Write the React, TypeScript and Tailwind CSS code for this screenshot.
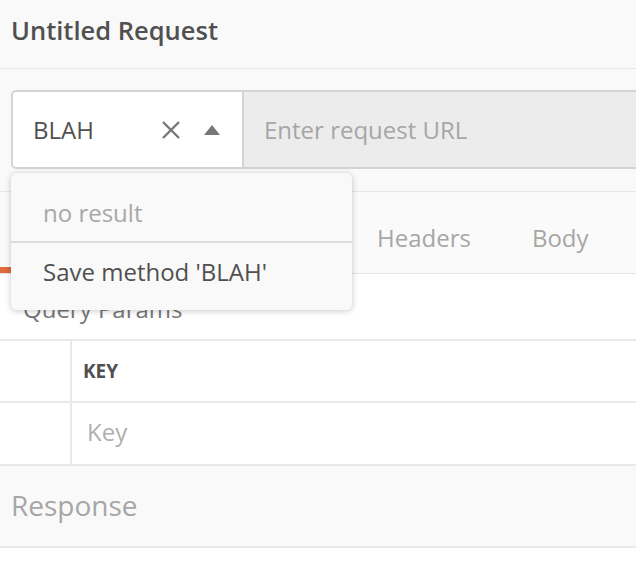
import React from "react";

const font = { fontFamily: '"Open Sans", "Noto Sans", sans-serif' };

export default function App() {
  return (
    <div className="relative w-[636px] h-[582px] overflow-hidden bg-white" style={font}>
      {/* title */}
      <div className="h-[69px] bg-[#f9f9f9] border-b border-[#e6e6e6] flex items-center px-[11px] pb-[7px]">
        <h1 className="text-[25.5px] font-semibold text-[#505050]">Untitled Request</h1>
      </div>

      {/* url bar */}
      <div className="bg-[#f9f9f9] pt-[21px] pb-[22px] pl-[11px] flex">
        <div className="w-[233px] h-[79px] bg-white border-2 border-[#d4d4d4] rounded-l-[5px] flex items-center pl-[20px] pr-[22px]">
          <span className="flex-1 text-[24px] text-[#505050]">BLAH</span>
          <svg width="20" height="20" viewBox="0 0 20 20" className="mr-[23px]">
            <path d="M2 2 L18 18 M18 2 L2 18" stroke="#777" strokeWidth="2.4" />
          </svg>
          <svg width="16" height="10" viewBox="0 0 16 10">
            <path d="M8 0 L16 10 L0 10 Z" fill="#777" />
          </svg>
        </div>
        <div className="flex-1 h-[79px] bg-[#ececec] border-y-2 border-[#d4d4d4] flex items-center pl-[20px]">
          <span className="text-[24px] text-[#a6a6a6]">Enter request URL</span>
        </div>
      </div>

      {/* tabs (the active one sits under the dropdown) */}
      <div className="h-[83px] bg-[#fafafa] border-y border-[#e6e6e6] flex items-stretch">
        <div className="relative w-[150px]">
          <div className="absolute left-0 right-0 bottom-0 h-[6px] bg-[#e06a3b]" />
        </div>
        <div className="w-[215px]" />
        <div className="flex items-center pl-[12px] pr-[61px] pt-[10px] text-[24px] text-[#a6a6a6]">Headers</div>
        <div className="flex items-center pt-[10px] text-[24px] text-[#a6a6a6]">Body</div>
      </div>

      {/* query params */}
      <div className="h-[65px] bg-white pl-[23px] pt-[17px]">
        <span className="text-[24px] text-[#777]">Query Params</span>
      </div>
      <div className="border-t-2 border-[#e9e9e9]">
        <div className="flex h-[62px] border-b-2 border-[#e9e9e9]">
          <div className="w-[72px] border-r-2 border-[#e9e9e9]" />
          <div className="flex items-center pl-[11px] text-[19px] font-bold text-[#505050]">KEY</div>
        </div>
        <div className="flex h-[61px]">
          <div className="w-[72px] border-r-2 border-[#e9e9e9]" />
          <div className="flex items-center pl-[15px] pb-[4px] text-[24px] text-[#b0b0b0]">Key</div>
        </div>
      </div>

      {/* response */}
      <div className="h-[84px] bg-[#f9f9f9] border-y-2 border-[#e9e9e9] flex items-center pl-[11px] pb-[2px]">
        <span className="text-[28px] text-[#a6a6a6]">Response</span>
      </div>

      {/* method dropdown */}
      <div className="absolute left-[11px] top-[173px] w-[341px] h-[137px] bg-[#f9f9f9] rounded-[6px] shadow-[0_1px_6px_rgba(0,0,0,0.22)] flex flex-col">
        <div className="h-[70px] border-b-2 border-[#dcdcdc] flex items-center pl-[32px] pt-[12px] text-[24px] text-[#a8a8a8]">
          no result
        </div>
        <div className="flex-1 flex items-center pl-[32px] pb-[9px] text-[24px] text-[#505050]">Save method 'BLAH'</div>
      </div>
    </div>
  );
}
